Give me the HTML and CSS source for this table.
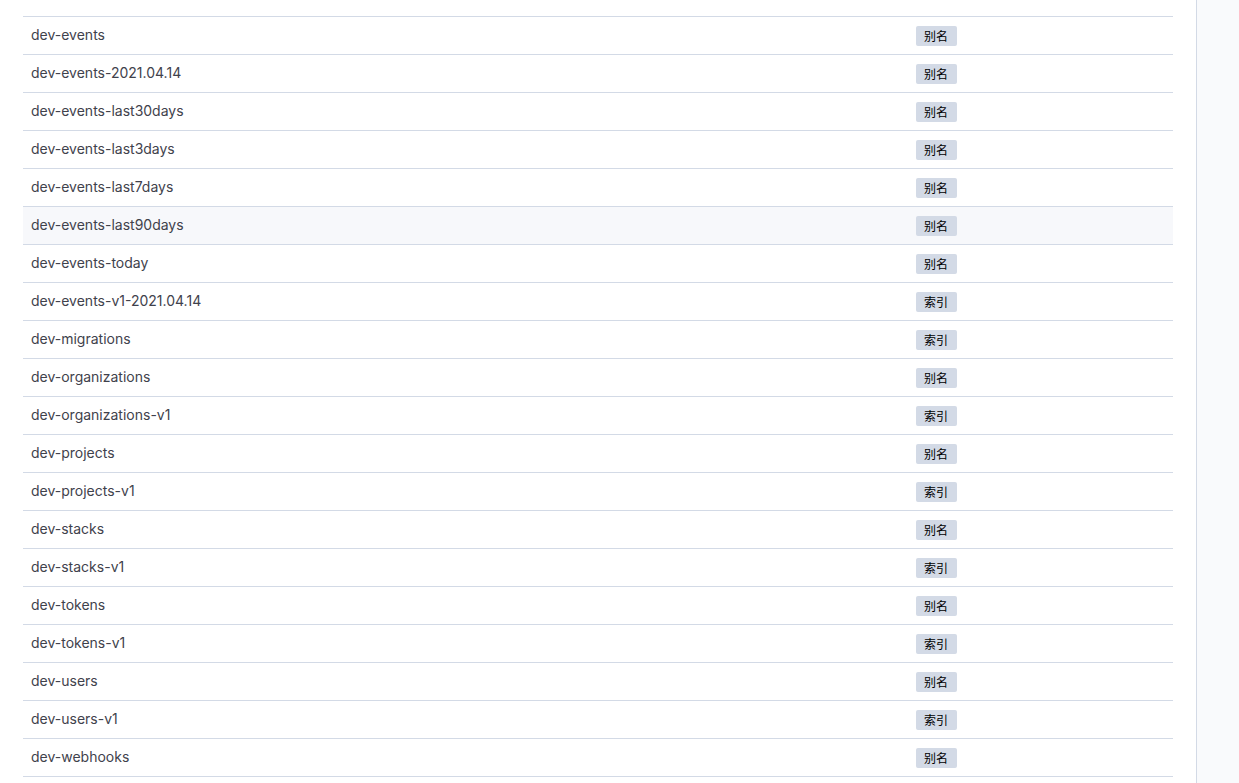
FILE: index.html
```html
<!DOCTYPE html>
<html lang="zh">
<head>
  <meta charset="UTF-8">
  <title>索引</title>
  <link rel="stylesheet" href="styles.css">
</head>
<body>
  <div class="page">
    <div class="content">
      <div class="index-table" id="index-table"></div>
    </div>
    <div class="side"></div>
  </div>
  <script>
    const rows = [
      ["dev-events", "alias"],
      ["dev-events-2021.04.14", "alias"],
      ["dev-events-last30days", "alias"],
      ["dev-events-last3days", "alias"],
      ["dev-events-last7days", "alias"],
      ["dev-events-last90days", "alias"],
      ["dev-events-today", "alias"],
      ["dev-events-v1-2021.04.14", "index"],
      ["dev-migrations", "index"],
      ["dev-organizations", "alias"],
      ["dev-organizations-v1", "index"],
      ["dev-projects", "alias"],
      ["dev-projects-v1", "index"],
      ["dev-stacks", "alias"],
      ["dev-stacks-v1", "index"],
      ["dev-tokens", "alias"],
      ["dev-tokens-v1", "index"],
      ["dev-users", "alias"],
      ["dev-users-v1", "index"],
      ["dev-webhooks", "alias"]
    ];
    const labels = { alias: "别名", index: "索引" };
    const hovered = "dev-events-last90days";

    document.getElementById('index-table').innerHTML = rows.map(([name, type]) => `
      <div class="row${name === hovered ? ' hover' : ''}">
        <div class="cell name">${name}</div>
        <div class="cell type"><span class="badge">${labels[type]}</span></div>
      </div>`).join("");
  </script>
</body>
</html>
```

FILE: styles.css
```css
* { margin: 0; padding: 0; box-sizing: border-box; }
body {
  font-family: 'Inter', 'Noto Sans CJK SC', sans-serif;
  background-color: #fff;
  color: #3f424c;
  height: 100vh;
  overflow: hidden;
}
.page {
  display: flex;
  height: 100%;
}
.content {
  width: 1197px;
  padding: 16px 23px 0 23px;
  border-right: 1px solid #d3dae6;
  background-color: #fff;
}
.side {
  flex: 1;
  background-color: #f9fafc;
}
.index-table {
  width: 1150px;
  border-bottom: 1px solid #d3dae6;
}
.row {
  display: grid;
  grid-template-columns: 885px 1fr;
  height: 38px;
  border-top: 1px solid #d3dae6;
  align-items: center;
}
.row.hover { background-color: #f7f8fb; }
.cell {
  padding: 0 8px;
  font-size: 14px;
  line-height: 20px;
}
.name { margin-top: -1px; }
.badge {
  display: inline-block;
  background-color: #d3dae6;
  color: #000;
  font-family: 'Noto Sans CJK SC', sans-serif;
  font-size: 12px;
  line-height: 20px;
  height: 20px;
  padding: 0 9px 0 8px;
  border-radius: 2px;
  vertical-align: middle;
}
```
